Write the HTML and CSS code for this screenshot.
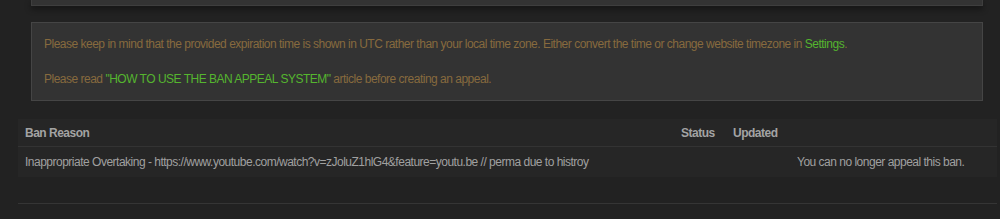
FILE: index.html
```html
<!DOCTYPE html>
<html>
<head>
<meta charset="utf-8">
<link rel="stylesheet" href="styles.css">
</head>
<body>
<div class="page">
  <div class="top-card"></div>
  <div class="notice">
    <p>Please keep in mind that the provided expiration time is shown in UTC rather than your local time zone. Either convert the time or change website timezone in <a class="link">Settings</a>.</p>
    <p>Please read <a class="link">"HOW TO USE THE BAN APPEAL SYSTEM"</a> article before creating an appeal.</p>
  </div>
  <table class="bans">
    <thead>
      <tr>
        <th class="c-reason">Ban Reason</th>
        <th class="c-status">Status</th>
        <th class="c-updated">Updated</th>
        <th class="c-action"></th>
      </tr>
    </thead>
    <tbody>
      <tr class="row">
        <td class="c-reason">Inappropriate Overtaking - https://www.youtube.com/watch?v=zJoluZ1hlG4&amp;feature=youtu.be // perma due to histroy</td>
        <td class="c-status"></td>
        <td class="c-updated"></td>
        <td class="c-action">You can no longer appeal this ban.</td>
      </tr>
      <tr class="spacer"><td colspan="4"></td></tr>
    </tbody>
  </table>
</div>
</body>
</html>
```

FILE: styles.css
```css
html, body {
  margin: 0;
  padding: 0;
  background: #222222;
  font-family: "Liberation Sans", Arial, sans-serif;
  font-size: 12px;
  letter-spacing: -0.5px;
}

.page {
  width: 1000px;
  height: 219px;
  overflow: hidden;
}

.top-card {
  margin-left: 31px;
  width: 950px;
  height: 5px;
  background: #333333;
  border: 1px solid #3e3e3e;
  border-top: none;
  box-shadow: 0 3px 6px rgba(0, 0, 0, 0.45);
}

.notice {
  margin: 16px 0 0 31px;
  width: 926px;
  padding: 13px 12px 12px 12px;
  background: #333333;
  border: 1px solid #454545;
  color: #876a3e;
}

.notice p {
  margin: 0;
  line-height: 17px;
}

.notice p + p {
  margin-top: 18px;
}

.link {
  color: #55b52f;
  text-decoration: none;
}

.bans {
  margin: 18px 0 0 18px;
  width: 978px;
  border-collapse: collapse;
  table-layout: fixed;
  color: #a0a0a0;
}

.bans th {
  background: #262626;
  text-align: left;
  font-weight: bold;
  color: #a3a3a3;
  height: 27px;
  padding: 0 7px;
  border-bottom: 1px solid #333333;
}

.bans td {
  padding: 0 7px;
}

.row td {
  background: #262626;
  height: 30px;
  white-space: nowrap;
}

.c-reason { width: 641px; }
.c-status { width: 38px; padding-left: 8px !important; }
.c-updated { width: 50px; }
.c-action { width: 193px; }

.spacer td {
  height: 26px;
  border-bottom: 1px solid #353535;
}
```
